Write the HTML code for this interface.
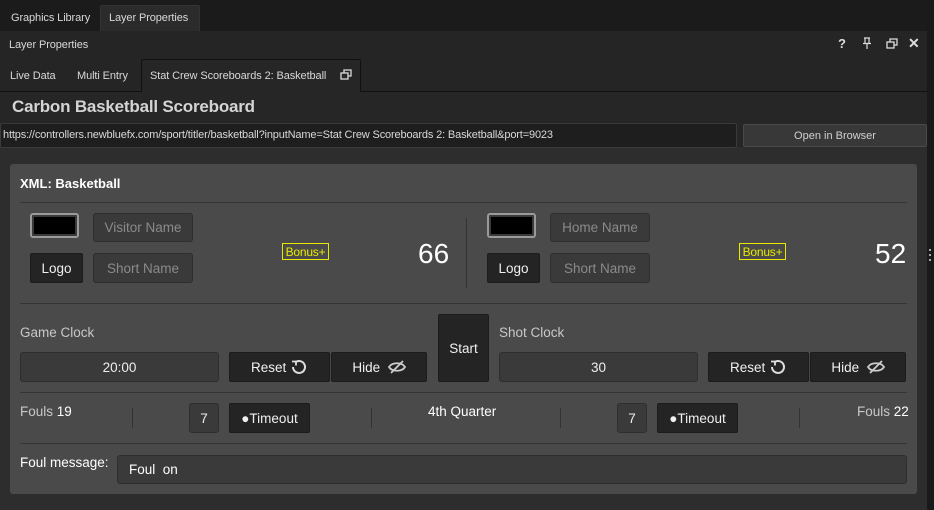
<!DOCTYPE html>
<html><head><meta charset="utf-8"><style>
*{box-sizing:border-box;margin:0;padding:0}
body{width:934px;height:510px;overflow:hidden;background:#2d2d2d;font-family:"Liberation Sans",sans-serif;position:relative;color:#ddd}
.a{position:absolute}
.t{font-size:11px;color:#d8d8d8;letter-spacing:-0.1px}
.fld{position:absolute;background:#3a3a3a;border:1px solid #2e2e2e;border-radius:3px;color:#8a8a8a;font-size:13.5px;display:flex;align-items:center;justify-content:center}
.btn{position:absolute;background:#242424;border:1px solid #1c1c1c;border-radius:2px;color:#f0f0f0;font-size:13.5px;display:flex;align-items:center;justify-content:center}
.ln{position:absolute;height:1px;background:#353535;left:20px;width:887px}
.vd{position:absolute;width:1px;background:#333}
.bonus{position:absolute;border:1px solid #e8e800;color:#e8e800;font-size:12px;height:17px;width:47px;display:flex;align-items:center;justify-content:center;letter-spacing:-0.2px}
.lbl{position:absolute;color:#c8c8c8;font-size:13.5px}
</style></head><body>
<div class="a" style="left:0;top:0;width:934px;height:31px;background:#1b1b1b"></div>
<div class="a t" style="left:11px;top:12px">Graphics Library</div>
<div class="a" style="left:100px;top:5px;width:100px;height:26px;background:#2b2b2b;border:1px solid #333;border-bottom:none;border-radius:2px 2px 0 0"></div>
<div class="a t" style="left:109px;top:12px">Layer Properties</div>
<div class="a" style="left:0;top:31px;width:927px;height:61px;background:#252525"></div>
<div class="a t" style="left:9px;top:39px">Layer Properties</div>
<div class="a" style="left:838px;top:36px;color:#ddd;font-size:13px;font-weight:bold">?</div>
<svg class="a" style="left:861px;top:37px" width="12" height="13" viewBox="0 0 12 13" fill="none" stroke="#ddd" stroke-width="1.2"><path d="M3 1h6M4 1v5M8 1v5M2 6.5h8M6 7v5"/></svg>
<svg class="a" style="left:886px;top:38px" width="12" height="11" viewBox="0 0 12 11" fill="none" stroke="#ddd" stroke-width="1.3"><rect x="1" y="4" width="7" height="6"/><path d="M4 4V1h7v6H8"/></svg>
<div class="a" style="left:908px;top:35px;color:#ddd;font-size:14px;font-weight:bold">✕</div>
<div class="a" style="left:0;top:91px;width:927px;height:1px;background:#111"></div>
<div class="a t" style="left:10px;top:70px">Live Data</div>
<div class="a t" style="left:77px;top:70px">Multi Entry</div>
<div class="a" style="left:141px;top:59px;width:220px;height:33px;background:#262626;border:1px solid #111;border-bottom:none;border-radius:2px 2px 0 0"></div>
<div class="a t" style="left:150px;top:70px">Stat Crew Scoreboards 2: Basketball</div>
<svg class="a" style="left:340px;top:69px" width="12" height="11" viewBox="0 0 12 11" fill="none" stroke="#ddd" stroke-width="1.3"><rect x="1" y="4" width="7" height="6"/><path d="M4 4V1h7v6H8"/></svg>
<div class="a" style="left:0;top:92px;width:927px;height:55px;background:#262626"></div>
<div class="a" style="left:12px;top:97px;font-size:17px;font-weight:bold;color:#d4d4d4;letter-spacing:-0.2px">Carbon Basketball Scoreboard</div>
<div class="a" style="left:0;top:123px;width:737px;height:25px;background:#1e1e1e;border:1px solid #3a3a3a;border-radius:2px"></div>
<div class="a t" style="left:3px;top:129px;color:#d8d8d8;letter-spacing:-0.15px">https://controllers.newbluefx.com/sport/titler/basketball?inputName=Stat Crew Scoreboards 2: Basketball&amp;port=9023</div>
<div class="a" style="left:743px;top:124px;width:184px;height:23px;background:#383838;border:1px solid #4a4a4a;border-radius:2px;font-size:11px;color:#d0d0d0;display:flex;align-items:center;justify-content:center">Open in Browser</div>
<div class="a" style="left:927px;top:0;width:7px;height:510px;background:#1a1a1a"></div>
<div class="a" style="left:929px;top:249px;width:2px;height:2px;background:#aaa;box-shadow:0 5px #aaa,0 10px #aaa"></div>

<div class="a" style="left:10px;top:164px;width:907px;height:330px;background:#4a4a4a;border-radius:3px"></div>
<div class="a" style="left:20px;top:176px;font-size:13px;font-weight:bold;color:#fff">XML: Basketball</div>
<div class="ln" style="top:202px"></div>

<div class="a" style="left:30px;top:213px;width:49px;height:25px;background:#000;border:2px solid #9a9a9a;border-radius:3px;box-shadow:inset 0 0 0 2px #3a3a3a"></div>
<div class="fld" style="left:93px;top:213px;width:100px;height:29px">Visitor Name</div>
<div class="btn" style="left:30px;top:253px;width:53px;height:30px">Logo</div>
<div class="fld" style="left:93px;top:253px;width:100px;height:30px">Short Name</div>
<div class="bonus" style="left:282px;top:243px">Bonus+</div>
<div class="a" style="left:418px;top:238px;font-size:28px;color:#fff">66</div>
<div class="vd" style="left:466px;top:218px;height:70px"></div>

<div class="a" style="left:487px;top:213px;width:49px;height:25px;background:#000;border:2px solid #9a9a9a;border-radius:3px;box-shadow:inset 0 0 0 2px #3a3a3a"></div>
<div class="fld" style="left:550px;top:213px;width:100px;height:29px">Home Name</div>
<div class="btn" style="left:487px;top:253px;width:53px;height:30px">Logo</div>
<div class="fld" style="left:550px;top:253px;width:100px;height:30px">Short Name</div>
<div class="bonus" style="left:739px;top:243px">Bonus+</div>
<div class="a" style="left:875px;top:238px;font-size:28px;color:#fff">52</div>

<div class="ln" style="top:303px"></div>
<div class="lbl" style="left:20px;top:325px">Game Clock</div>
<div class="fld" style="left:20px;top:352px;width:199px;height:30px;color:#eee">20:00</div>
<div class="btn" style="left:229px;top:352px;width:101px;height:30px">Reset&nbsp;<svg width="18" height="18" viewBox="0 0 18 18" fill="none" stroke="#ddd" stroke-width="2"><path d="M5 4.5A6 6 0 1 1 3 9"/><path d="M2 3.5h4v4" stroke-width="1.8"/></svg></div>
<div class="btn" style="left:331px;top:352px;width:96px;height:30px">Hide&nbsp;&nbsp;<svg width="18" height="14" viewBox="0 0 18 14" fill="none" stroke="#ccc" stroke-width="1.8"><path d="M1 7c3-5 13-5 16 0c-3 5-13 5-16 0z"/><path d="M3 13L15 1"/></svg></div>
<div class="btn" style="left:438px;top:314px;width:51px;height:68px">Start</div>
<div class="lbl" style="left:499px;top:325px">Shot Clock</div>
<div class="fld" style="left:499px;top:352px;width:199px;height:30px;color:#eee">30</div>
<div class="btn" style="left:708px;top:352px;width:101px;height:30px">Reset&nbsp;<svg width="18" height="18" viewBox="0 0 18 18" fill="none" stroke="#ddd" stroke-width="2"><path d="M5 4.5A6 6 0 1 1 3 9"/><path d="M2 3.5h4v4" stroke-width="1.8"/></svg></div>
<div class="btn" style="left:810px;top:352px;width:96px;height:30px">Hide&nbsp;&nbsp;<svg width="18" height="14" viewBox="0 0 18 14" fill="none" stroke="#ccc" stroke-width="1.8"><path d="M1 7c3-5 13-5 16 0c-3 5-13 5-16 0z"/><path d="M3 13L15 1"/></svg></div>

<div class="ln" style="top:392px"></div>
<div class="lbl" style="left:20px;top:404px">Fouls <span style="color:#fff">19</span></div>
<div class="vd" style="left:132px;top:408px;height:20px"></div>
<div class="fld" style="left:189px;top:403px;width:30px;height:30px;color:#eee">7</div>
<div class="btn" style="left:229px;top:403px;width:81px;height:30px">●Timeout</div>
<div class="vd" style="left:371px;top:408px;height:20px"></div>
<div class="a" style="left:428px;top:404px;font-size:13.5px;color:#fff">4th Quarter</div>
<div class="vd" style="left:560px;top:408px;height:20px"></div>
<div class="fld" style="left:617px;top:403px;width:30px;height:30px;color:#eee">7</div>
<div class="btn" style="left:657px;top:403px;width:81px;height:30px">●Timeout</div>
<div class="vd" style="left:799px;top:408px;height:20px"></div>
<div class="lbl" style="left:857px;top:404px">Fouls <span style="color:#fff">22</span></div>

<div class="ln" style="top:443px"></div>
<div class="a" style="left:20px;top:455px;font-size:13.5px;color:#fff">Foul message:</div>
<div class="fld" style="left:117px;top:455px;width:790px;height:29px;justify-content:flex-start;padding-left:11px;color:#fff">Foul&nbsp;&nbsp;on</div>
</body></html>
